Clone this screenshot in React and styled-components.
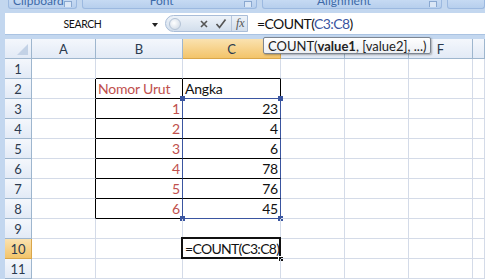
import styled, { createGlobalStyle } from "styled-components";

const GlobalStyle = createGlobalStyle`
  html, body { margin: 0; padding: 0; }
  body {
    background: #c3d7ef;
    font-family: Lato, "Liberation Sans", sans-serif;
    overflow: hidden;
  }
`;

const COLS = ["A", "B", "C", "D", "E", "F", ""];
const RED = "#c0504d";
const REF = "#3a55a0";
const GRID = "#d4dbe8";

// what sits in each cell, keyed by row then column letter
const data = {
  2: { B: { text: "Nomor Urut", color: RED }, C: { text: "Angka" } },
  3: { B: { text: "1", color: RED, right: true }, C: { text: "23", right: true } },
  4: { B: { text: "2", color: RED, right: true }, C: { text: "4", right: true } },
  5: { B: { text: "3", color: RED, right: true }, C: { text: "6", right: true } },
  6: { B: { text: "4", color: RED, right: true }, C: { text: "78", right: true } },
  7: { B: { text: "5", color: RED, right: true }, C: { text: "76", right: true } },
  8: { B: { text: "6", color: RED, right: true }, C: { text: "45", right: true } },
  10: { C: { formula: true } },
};

const rightBorder = (r, c) => {
  if (r >= 3 && r <= 8 && (c === "B" || c === "C")) return REF;
  if (r >= 2 && r <= 8 && (c === "A" || c === "B" || c === "C")) return "#000";
  return GRID;
};

const bottomBorder = (r, c) => {
  if (c === "C" && (r === 2 || r === 8)) return REF;
  if (r >= 1 && r <= 8 && (c === "B" || c === "C")) return "#000";
  return GRID;
};

const Window = styled.div`
  width: 485px;
  height: 279px;
  display: flex;
  flex-direction: column;
  overflow: hidden;
`;

const Ribbon = styled.div`
  height: 14px;
  display: flex;
  gap: 5px;
  padding-left: 8px;
`;

const Group = styled.div`
  width: ${(p) => p.$w}px;
  height: 9px;
  box-sizing: border-box;
  display: flex;
  align-items: flex-end;
  justify-content: ${(p) => (p.$left ? "flex-start" : "center")};
  padding: 0 16px 0 ${(p) => (p.$left ? 4 : 0)}px;
  position: relative;
  overflow: hidden;
  background: linear-gradient(#c6daf3, #b7cfed);
  border: 1px solid #9cb9e0;
  border-top: none;
  border-radius: 0 0 3px 3px;
`;

const GroupLabel = styled.span`
  font-size: 12px;
  line-height: 12px;
  margin-bottom: 1px;
  color: #3d6aa8;
  white-space: nowrap;
`;

const Launcher = styled.span`
  position: absolute;
  right: 4px;
  bottom: 1px;
  width: 6px;
  height: 5px;
  border: 1px solid #8aa8d0;
  border-bottom: none;
  background: #dbe7f6;
`;

const FormulaBar = styled.div`
  margin-left: 5px;
  height: 22px;
  background: #fff;
  display: flex;
  align-items: center;
  border-bottom: 1px solid #aac3e2;
`;

const NameBox = styled.div`
  width: 155px;
  display: flex;
  align-items: center;
  justify-content: center;
  position: relative;
  font-size: 10.5px;
  letter-spacing: -0.4px;
  color: #111;
`;

const DropArrow = styled.span`
  position: absolute;
  right: 2px;
  top: 5px;
  width: 0;
  height: 0;
  border-left: 3px solid transparent;
  border-right: 3px solid transparent;
  border-top: 4px solid #222;
`;

const Bubble = styled.div`
  margin-left: 5px;
  width: 83px;
  height: 17px;
  box-sizing: border-box;
  display: flex;
  align-items: center;
  border: 1px solid #a9bdd8;
  border-radius: 9px 0 0 9px;
  background: linear-gradient(#eef3f9, #d2deec);
  padding-left: 3px;
`;

const Knob = styled.span`
  width: 10px;
  height: 10px;
  border-radius: 50%;
  background: radial-gradient(circle at 40% 40%, #ffffff, #c9d4e2);
  border: 1px solid #b4c3d6;
`;

const BarIcon = styled.span`
  display: flex;
  align-items: center;
  justify-content: center;
  width: 17px;
  margin-left: ${(p) => p.$ml || 0}px;
`;

const Fx = styled.span`
  font-family: "Liberation Serif", serif;
  font-style: italic;
  font-size: 12px;
  color: #555;
  padding-left: 4px;
  border-left: 1px solid #b6c6dc;
  margin-left: 2px;
  height: 15px;
  line-height: 15px;
`;

const FormulaText = styled.div`
  margin-left: 9px;
  font-size: 14px;
  letter-spacing: -0.6px;
  color: #111;
`;

const RefText = styled.span`
  color: ${REF};
`;

const Spacer = styled.div`
  height: 4px;
`;

const Sheet = styled.div`
  margin-left: 5px;
  position: relative;
  display: grid;
  grid-template-columns: 27px 64px 87px 98px 64px 64px 64px 1fr;
  grid-auto-rows: 20px;
  background: #fff;
`;

const Corner = styled.div`
  background: linear-gradient(#f4f7fc, #e2eaf6);
  border-right: 1px solid #9eb6ce;
  border-bottom: 1px solid #9eb6ce;
  display: flex;
  align-items: flex-end;
  justify-content: flex-end;
  padding: 0 3px 3px 0;
  box-sizing: border-box;
`;

const CornerTri = styled.span`
  width: 0;
  height: 0;
  border-left: 11px solid transparent;
  border-bottom: 11px solid #c3d2e6;
`;

const Head = styled.div`
  box-sizing: border-box;
  display: flex;
  align-items: center;
  justify-content: center;
  font-size: 13px;
  color: #2b3a4e;
  background: ${(p) =>
    p.$active
      ? "linear-gradient(#fae2b0, #f3c46a)"
      : "linear-gradient(#f4f7fc, #e2eaf6)"};
  border-right: 1px solid ${(p) => (p.$active ? "#d9a64a" : "#9eb6ce")};
  border-bottom: 1px solid ${(p) => (p.$active ? "#d9a64a" : "#9eb6ce")};
`;

const Cell = styled.div`
  position: relative;
  box-sizing: border-box;
  display: flex;
  align-items: center;
  justify-content: ${(p) => (p.$right ? "flex-end" : "flex-start")};
  padding: 0 2px;
  font-size: 14px;
  letter-spacing: ${(p) => (p.$tight ? "-0.7px" : "-0.2px")};
  color: ${(p) => p.$color || "#111"};
  border-right: 1px solid ${(p) => p.$br};
  border-bottom: 1px solid ${(p) => p.$bb};
  white-space: nowrap;
`;

const Selected = styled.span`
  position: absolute;
  left: -2px;
  top: -2px;
  right: -1px;
  bottom: -1px;
  border: 2px solid #111;
  pointer-events: none;
`;

const FillHandle = styled.span`
  position: absolute;
  right: -3px;
  bottom: -3px;
  width: 4px;
  height: 4px;
  background: #111;
  border: 1px solid #fff;
  border-right: none;
  border-bottom: none;
`;

const Handle = styled.span`
  position: absolute;
  width: 5px;
  height: 5px;
  background: ${REF};
  ${(p) => (p.$top ? "top: -3px;" : "bottom: -3px;")}
  ${(p) => (p.$left ? "left: -3px;" : "right: -3px;")}
`;

const Tooltip = styled.div`
  position: absolute;
  left: 258px;
  top: -2px;
  height: 17px;
  box-sizing: border-box;
  padding: 0 4px;
  display: flex;
  align-items: center;
  font-size: 13px;
  color: #222;
  background: linear-gradient(#ffffff, #eceff3);
  border: 1px solid #7d8590;
  border-radius: 2px;
  box-shadow: 1px 1px 2px rgba(0, 0, 0, 0.3);
  white-space: nowrap;
`;

const CrossIcon = () => (
  <svg width="10" height="10" viewBox="0 0 10 10">
    <path d="M2 2 L8 8 M8 2 L2 8" stroke="#555" strokeWidth="1.6" />
  </svg>
);

const CheckIcon = () => (
  <svg width="12" height="11" viewBox="0 0 12 11">
    <path d="M1.5 6 L4.5 9.5 L10.5 1.5" stroke="#555" strokeWidth="1.7" fill="none" />
  </svg>
);

const App = () => {
  const rows = Array.from({ length: 11 }, (_, i) => i + 1);

  return (
    <Window>
      <GlobalStyle />
      <Ribbon>
        <Group $w={74} $left>
          <GroupLabel>Clipboard</GroupLabel>
          <Launcher />
        </Group>
        <Group $w={190}>
          <GroupLabel>Font</GroupLabel>
          <Launcher />
        </Group>
        <Group $w={196}>
          <GroupLabel>Alignment</GroupLabel>
          <Launcher />
        </Group>
        <Group $w={40} />
      </Ribbon>

      <FormulaBar>
        <NameBox>
          SEARCH
          <DropArrow />
        </NameBox>
        <Bubble>
          <Knob />
          <BarIcon $ml={14}>
            <CrossIcon />
          </BarIcon>
          <BarIcon>
            <CheckIcon />
          </BarIcon>
          <Fx>fx</Fx>
        </Bubble>
        <FormulaText>
          =COUNT(<RefText>C3:C8</RefText>)
        </FormulaText>
      </FormulaBar>
      <Spacer />

      <Sheet>
        <Corner>
          <CornerTri />
        </Corner>
        {COLS.map((c, i) => (
          <Head key={`h-${i}`} $active={c === "C"}>
            {c}
          </Head>
        ))}

        {rows.map((r) => [
          <Head key={`r-${r}`} $active={r === 10}>
            {r}
          </Head>,
          ...COLS.map((c, i) => {
            const cell = (data[r] && data[r][c]) || {};
            return (
              <Cell
                key={`${r}-${i}`}
                $right={cell.right}
                $color={cell.color}
                $tight={cell.formula}
                $br={rightBorder(r, c)}
                $bb={bottomBorder(r, c)}
              >
                {cell.text}
                {cell.formula && (
                  <>
                    =COUNT(C3:C8)
                    <Selected />
                    <FillHandle />
                  </>
                )}
                {r === 3 && c === "C" && (
                  <>
                    <Handle $top $left />
                    <Handle $top />
                  </>
                )}
                {r === 8 && c === "C" && (
                  <>
                    <Handle $left />
                    <Handle />
                  </>
                )}
              </Cell>
            );
          }),
        ])}

        <Tooltip>
          COUNT(<b>value1</b>, [value2], ...)
        </Tooltip>
      </Sheet>
    </Window>
  );
};

export default App;
